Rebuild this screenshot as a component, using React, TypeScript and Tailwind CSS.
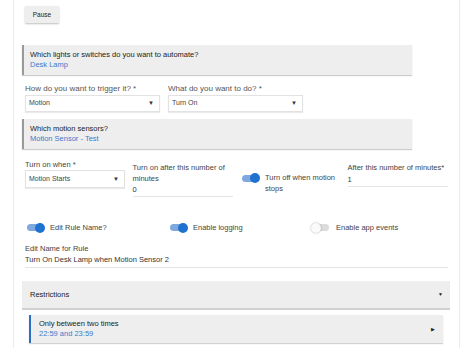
import React from "react";

const blue = "text-[#3d7bcc]";

function Toggle({ on }: { on: boolean }) {
  return (
    <div className="relative w-[20px] h-[10px] shrink-0">
      <div className={`absolute left-[2px] top-[1.5px] w-[16px] h-[7px] rounded-full ${on ? "bg-[#7fa8de]" : "bg-[#dcdcdc]"}`}></div>
      <div
        className={`absolute top-0 w-[10px] h-[10px] rounded-full ${
          on ? "left-[10px] bg-[#1f72d0]" : "left-0 bg-[#fafafa] shadow-[0_0_2px_rgba(0,0,0,0.35)]"
        }`}
      ></div>
    </div>
  );
}

function Select({ value, width, height }: { value: string; width: string; height: string }) {
  return (
    <div className={`${width} ${height} flex items-center justify-between bg-white border border-[#e2e2e2] shadow-[0_1px_1px_rgba(0,0,0,0.08)] pl-[3px] pr-[5px] text-[7px] text-[#444]`}>
      <span>{value}</span>
      <span className="text-[6px] text-[#333]">▼</span>
    </div>
  );
}

function Section({ title, value }: { title: string; value: string }) {
  return (
    <div className="ml-[8px] w-[390px] h-[30px] bg-[#eeeeee] border-l-2 border-[#9a9a9a] shadow-[0_1px_1px_rgba(0,0,0,0.2)] pl-[6px] flex flex-col justify-center text-[7.5px] leading-[10.5px]">
      <span className="text-[#222]">{title}</span>
      <span className={blue}>{value}</span>
    </div>
  );
}

export default function App() {
  return (
    <div className="w-[474px] h-[348px] overflow-hidden bg-white" style={{ fontFamily: '"Liberation Sans", Arial, sans-serif' }}>
      <div className="ml-[13px] w-[447px] h-[348px] border-x border-[#ebebeb] pt-[6px]">
        <div className="ml-[11px] w-[34px] h-[17px] bg-[#eeeeee] shadow-[0_1px_2px_rgba(0,0,0,0.25)] rounded-[1px] flex items-center justify-center text-[6.5px] text-[#222]">
          Pause
        </div>

        <div className="h-[22px]"></div>
        <Section title="Which lights or switches do you want to automate?" value="Desk Lamp" />

        <div className="ml-[11px] mt-[9px] flex gap-[8px]">
          <div className="flex flex-col">
            <span className="text-[8px] leading-[10px] text-[#555] mb-[1px]">How do you want to trigger it? *</span>
            <Select value="Motion" width="w-[135px]" height="h-[17px]" />
          </div>
          <div className="flex flex-col">
            <span className="text-[8px] leading-[10px] text-[#555] mb-[1px]">What do you want to do? *</span>
            <Select value="Turn On" width="w-[135px]" height="h-[17px]" />
          </div>
        </div>

        <div className="h-[7px]"></div>
        <Section title="Which motion sensors?" value="Motion Sensor - Test" />

        <div className="ml-[11px] mt-[11px] flex gap-[7.5px] items-start">
          <div className="w-[100px] flex flex-col">
            <span className="text-[7.5px] leading-[10px] text-[#444]">Turn on when *</span>
            <Select value="Motion Starts" width="w-[100px]" height="h-[18px]" />
          </div>
          <div className="w-[100px] flex flex-col mt-[2px] text-[7.5px] leading-[11px]">
            <span className="text-[#444]">Turn on after this number of minutes</span>
            <span className="text-[#333] border-b border-[#e4e4e4] pb-[1px]">0</span>
          </div>
          <div className="w-[100px] flex items-start gap-[5px] mt-[13px]">
            <Toggle on />
            <span className="text-[7.5px] leading-[11px] text-[#444] -mt-[1px]">Turn off when motion stops</span>
          </div>
          <div className="w-[100px] flex flex-col mt-[2px] text-[7.5px] leading-[11px]">
            <span className="text-[#444] whitespace-nowrap">After this number of minutes*</span>
            <span className="text-[#333] border-b border-[#e4e4e4] pt-[1px] pb-[1px]">1</span>
          </div>
        </div>

        <div className="ml-[11px] mt-[25px] flex text-[7.5px] text-[#444]">
          <div className="w-[143px] flex items-center gap-[5px]">
            <Toggle on />
            <span>Edit Rule Name?</span>
          </div>
          <div className="w-[143px] flex items-center gap-[5px]">
            <Toggle on />
            <span>Enable logging</span>
          </div>
          <div className="w-[143px] flex items-center gap-[5px]">
            <Toggle on={false} />
            <span>Enable app events</span>
          </div>
        </div>

        <div className="ml-[11px] mt-[10px] w-[423px] flex flex-col text-[7.5px] leading-[11px] border-b border-[#e4e4e4] pb-[2px]">
          <span className="text-[#444]">Edit Name for Rule</span>
          <span className="text-[#333]">Turn On Desk Lamp when Motion Sensor 2</span>
        </div>

        <div className="ml-[8px] mt-[13px] w-[428px] h-[29px] bg-[#eeeeee] border-b-2 border-[#d0d0d0] flex items-center justify-between pl-[8px] pr-[7px] text-[7.5px] text-[#222]">
          <span>Restrictions</span>
          <span className="text-[5px]">▼</span>
        </div>

        <div className="ml-[15px] mt-[5px] w-[414px] h-[28px] bg-[#eeeeee] border-l-2 border-[#2a6fc4] shadow-[0_1px_1px_rgba(0,0,0,0.18)] flex items-center justify-between pl-[8px] pr-[8px]">
          <div className="flex flex-col text-[7.5px] leading-[10.5px]">
            <span className="text-[#222]">Only between two times</span>
            <span className={blue}>22:59 and 23:59</span>
          </div>
          <span className="text-[5px] text-[#222]">▶</span>
        </div>
      </div>
    </div>
  );
}
